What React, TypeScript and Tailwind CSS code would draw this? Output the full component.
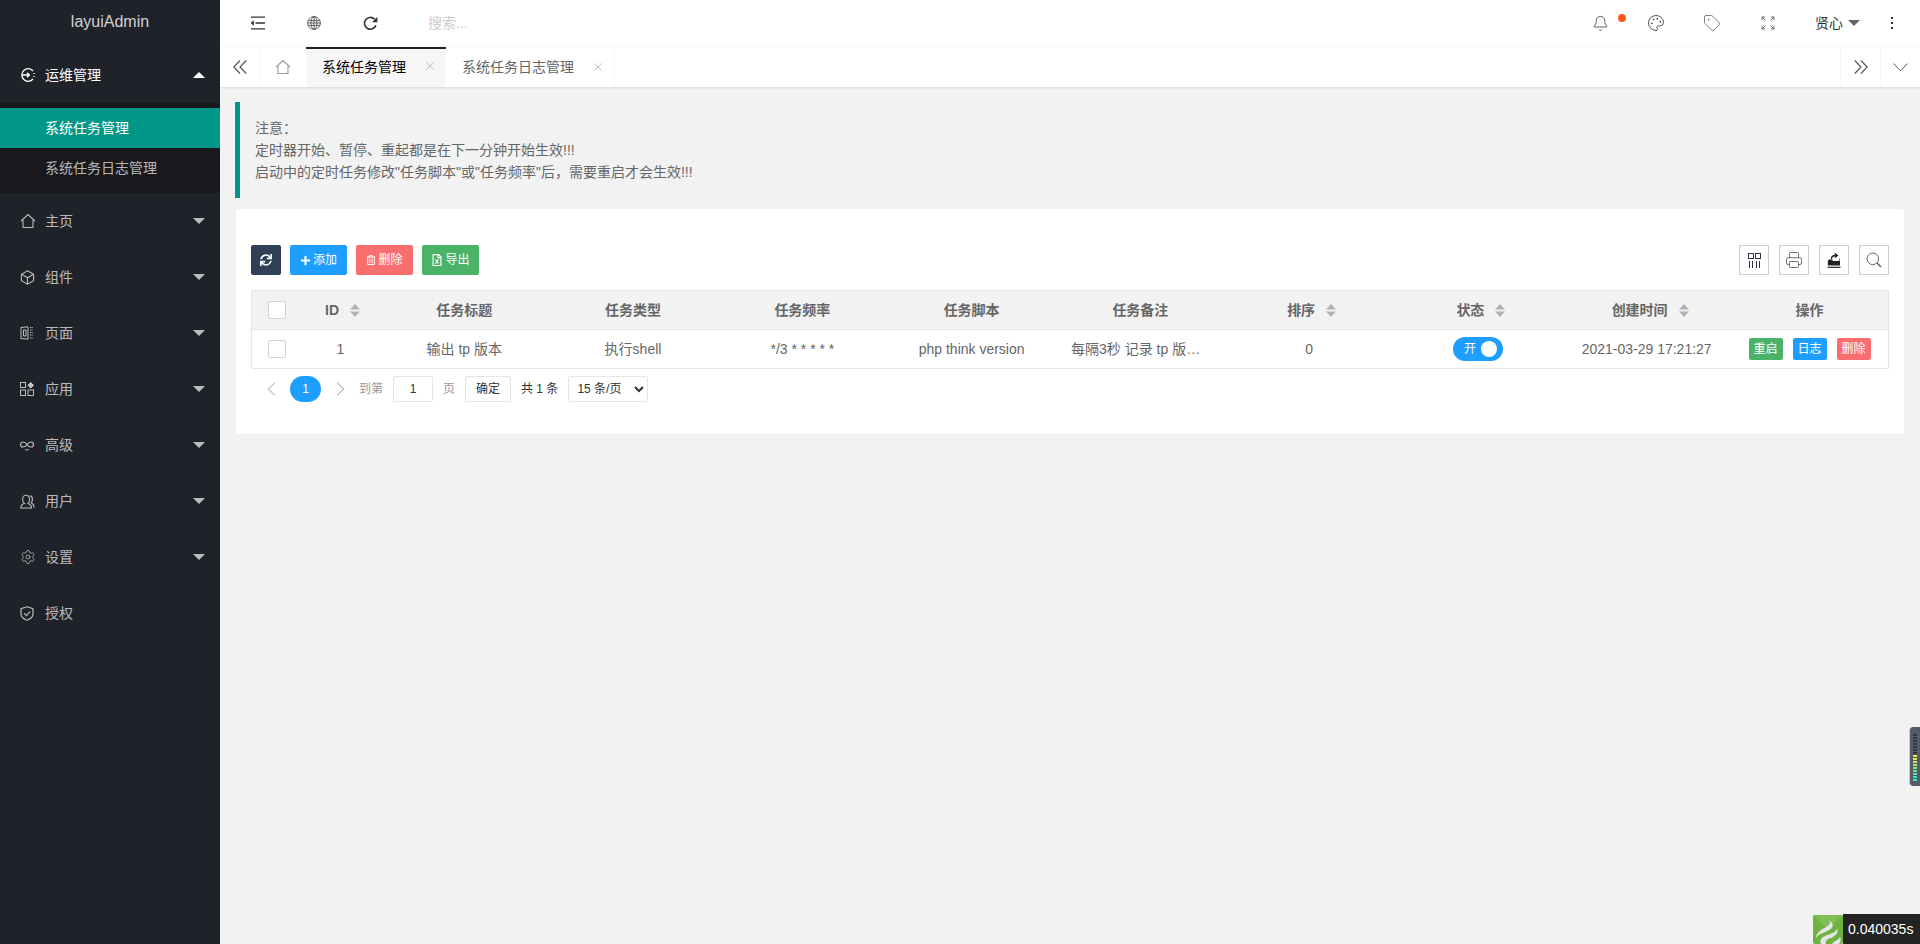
import React from "react";
import { Bell, Palette, Tag, Settings, Printer } from "lucide-react";
import { FaSync, FaPlus, FaRegTrashAlt, FaRegFileExcel } from "react-icons/fa";

function Caret({ up = false, cls = "" }: { up?: boolean; cls?: string }) {
  return (
    <svg width="12" height="6" viewBox="0 0 12 6" className={cls}>
      <path d={up ? "M0 6 L6 0 L12 6 Z" : "M0 0 L12 0 L6 6 Z"} fill="currentColor" />
    </svg>
  );
}

function HomeIcon({ size = 16 }: { size?: number }) {
  return (
    <svg width={size} height={size} viewBox="0 0 16 16" fill="none" stroke="currentColor" strokeWidth="1.1">
      <path d="M1 8 L8 1.5 L15 8" />
      <path d="M3 7 V14.5 H13 V7" />
    </svg>
  );
}

function OpsIcon() {
  return (
    <svg width="16" height="16" viewBox="0 0 16 16" fill="none" stroke="currentColor" strokeWidth="1.3">
      <path d="M13 4 A6.3 6.3 0 1 0 13 12" />
      <path d="M2 8 H9 M7 5.8 L9.4 8 L7 10.2" />
      <path d="M14 6 V7 M14 9 V10" />
    </svg>
  );
}

function CubeIcon() {
  return (
    <svg width="15" height="15" viewBox="0 0 15 15" fill="none" stroke="currentColor" strokeWidth="1.1">
      <path d="M7.5 .8 L13.6 4.2 V10.8 L7.5 14.2 L1.4 10.8 V4.2 Z" />
      <path d="M2 4.6 L7.5 7.8 L13 4.6 M7.5 7.8 V13.8" />
    </svg>
  );
}

function PageIcon() {
  return (
    <svg width="14" height="14" viewBox="0 0 14 14" fill="none" stroke="currentColor" strokeWidth="1">
      <path d="M1 1.5 L8 .8 V13.2 L1 12.5 Z" />
      <path d="M3.5 4 H6 V10 H3.5 Z" />
      <path d="M10 1.5 H13 M10 4 H13 M10 6.5 H13 M10 9 H13 M10 12 H13" strokeDasharray="1.5 .8" />
    </svg>
  );
}

function AppIcon() {
  return (
    <svg width="14" height="14" viewBox="0 0 14 14" fill="none" stroke="currentColor" strokeWidth="1">
      <rect x=".5" y=".5" width="5" height="5" />
      <rect x=".5" y="8" width="5" height="5.5" />
      <rect x="8" y="8" width="5.5" height="5.5" />
      <path d="M10.7 .5 L13.5 3.3 L10.7 6 L8 3.3 Z" fill="currentColor" />
    </svg>
  );
}

function InfinityIcon() {
  return (
    <svg width="14" height="14" viewBox="0 0 14 14" fill="none" stroke="currentColor" strokeWidth="1.2">
      <path d="M7 6.5 C5.5 4 3.8 4 2.8 4 C1.4 4 .6 5.2 .6 6.5 C.6 7.8 1.4 9 2.8 9 C3.8 9 5.5 9 7 6.5 C8.5 4 10.2 4 11.2 4 C12.6 4 13.4 5.2 13.4 6.5 C13.4 7.8 12.6 9 11.2 9 C10.2 9 8.5 9 7 6.5 Z" />
      <path d="M5 11.8 H9" strokeWidth="1" />
    </svg>
  );
}

function UserIcon() {
  return (
    <svg width="15" height="15" viewBox="0 0 15 15" fill="none" stroke="currentColor" strokeWidth="1.1">
      <path d="M.8 14 H11.5 C11.5 11.5 9.5 10 8 9.5 C9.4 8.5 9.6 7 9.6 5.2 C9.6 2.8 8 1.2 6 1.2 C4 1.2 2.6 2.8 2.6 5.2 C2.6 7 3 8.5 4.4 9.5 C2.6 10 .8 11.5 .8 14 Z" />
      <path d="M10 1.6 C12 2.4 12.6 4.2 12.4 6 C12.3 7.4 11.8 8 11.2 8.8 C12.8 9.6 14 11 14.2 13.6" />
    </svg>
  );
}

function ShieldIcon() {
  return (
    <svg width="14" height="15" viewBox="0 0 14 15" fill="none" stroke="currentColor" strokeWidth="1.2">
      <path d="M7 .8 L13 2.8 V8 C13 11 10 13.2 7 14.2 C4 13.2 1 11 1 8 V2.8 Z" />
      <path d="M4 7.2 L6.4 9.6 L10 5.6" />
    </svg>
  );
}

function SpreadIcon() {
  return (
    <svg width="16" height="14" viewBox="0 0 16 14" fill="none" stroke="#333" strokeWidth="1.3">
      <path d="M1 1.2 H15 M5.5 7 H15 M1 12.8 H15" />
      <path d="M3.6 4.8 L1 7 L3.6 9.2 Z" fill="#333" strokeWidth=".6" />
    </svg>
  );
}

function GlobeIcon() {
  return (
    <svg width="14" height="14" viewBox="0 0 14 14" fill="none" stroke="#555" strokeWidth=".9">
      <circle cx="7" cy="7" r="6.4" />
      <ellipse cx="7" cy="7" rx="3" ry="6.4" />
      <path d="M7 .6 V13.4 M1 4.6 H13 M.6 7 H13.4 M1 9.4 H13" />
    </svg>
  );
}

function RefreshIcon() {
  return (
    <svg width="15" height="15" viewBox="0 0 15 15" fill="none" stroke="#333" strokeWidth="1.6">
      <path d="M12.9 9.4 A5.9 5.9 0 1 1 11.6 3.2" />
      <path d="M14.4 .8 V6.2 H9 Z" fill="#333" stroke="none" />
    </svg>
  );
}

function FullIcon() {
  return (
    <svg width="14" height="14" viewBox="0 0 14 14" fill="none" stroke="#666" strokeWidth="1">
      <path d="M1 4 V1 H4 M1 1 L4.5 4.5" />
      <path d="M13 4 V1 H10 M13 1 L9.5 4.5" />
      <path d="M1 10 V13 H4 M1 13 L4.5 9.5" />
      <path d="M13 10 V13 H10 M13 13 L9.5 9.5" />
    </svg>
  );
}

function DoubleChevron({ right = false }: { right?: boolean }) {
  return (
    <svg width="14" height="14" viewBox="0 0 14 14" fill="none" stroke="#555" strokeWidth="1.2" className={right ? "rotate-180" : ""}>
      <path d="M7 .5 L.8 7 L7 13.5" />
      <path d="M13.2 .5 L7 7 L13.2 13.5" />
    </svg>
  );
}

function Chevron({ dir, color }: { dir: "left" | "right" | "down"; color: string }) {
  if (dir === "down") {
    return (
      <svg width="15" height="9" viewBox="0 0 15 9" fill="none" stroke={color} strokeWidth="1">
        <path d="M.5 .5 L7.5 7.8 L14.5 .5" />
      </svg>
    );
  }
  return (
    <svg width="9" height="14" viewBox="0 0 9 14" fill="none" stroke={color} strokeWidth="1.1">
      <path d={dir === "left" ? "M8 .7 L1.2 7 L8 13.3" : "M1 .7 L7.8 7 L1 13.3"} />
    </svg>
  );
}

function CloseIcon({ cls }: { cls: string }) {
  return (
    <svg width="8" height="8" viewBox="0 0 8 8" fill="none" stroke="#c2c2c2" strokeWidth="1" className={cls}>
      <path d="M.3 .3 L7.7 7.7 M7.7 .3 L.3 7.7" />
    </svg>
  );
}

function ColsIcon() {
  return (
    <svg width="13" height="15" viewBox="0 0 13 15" fill="none" stroke="#3b2a4a" strokeWidth="1">
      <rect x=".5" y=".5" width="5" height="5" />
      <rect x="7.5" y=".5" width="5" height="5" />
      <path d="M1.5 8 V15 M4.5 8 V15 M8.5 8 V15 M11.5 8 V15" />
    </svg>
  );
}

function ExportIcon() {
  return (
    <svg width="14" height="16" viewBox="0 0 14 16" fill="none">
      <path d="M.8 9 L2 7.5 H5 L6 9 H13 V13.6 H.8 Z" fill="#222" />
      <path d="M.5 15.3 H13.5" stroke="#222" strokeWidth="1.2" />
      <path d="M4.5 7 C4.5 4.5 6.5 3.5 8.5 3.5" stroke="#222" strokeWidth="1.4" />
      <path d="M7.8 .8 L11.5 3.5 L7.8 6.2 Z" fill="#222" />
      <path d="M12.5 6.5 V9" stroke="#777" />
    </svg>
  );
}

function MagnifierIcon() {
  return (
    <svg width="16" height="16" viewBox="0 0 16 16" fill="none" stroke="#666" strokeWidth="1">
      <circle cx="6.8" cy="6.8" r="5.8" />
      <path d="M11 11 L15 15" strokeWidth="1.6" />
    </svg>
  );
}

function Sort() {
  return (
    <svg width="10" height="13" viewBox="0 0 10 13" className="ml-[11px] text-[#b2b2b2]">
      <path d="M0 5.5 L5 0 L10 5.5 Z M0 7.5 L5 13 L10 7.5 Z" fill="currentColor" />
    </svg>
  );
}

function Check() {
  return <span className="block w-[18px] h-[18px] rounded-[2px] border border-[#d2d2d2] bg-white" />;
}

function Flame() {
  return (
    <svg width="30" height="29" viewBox="0 0 30 29" className="block">
      <rect width="30" height="29" rx="2" fill="#6db33f" />
      <path d="M0 0 L15 14 L30 0 Z" fill="#80bf53" />
      <path d="M16 5 C20 9 13 12 8 15 C5 17 3 20 3 23 C7 17 14 18 19 13 C21 10 19 7 16 5 Z" fill="#e6e6e6" />
      <path d="M24 13 C24 18 15 19 10 22 C7 24 7 27 8 29 H13 C12 26 14 24 18 23 C22 21 26 18 24 13 Z" fill="#e6e6e6" />
      <path d="M27 22 C26 25 21 26 19 29 H26 C28 27 28 24 27 22 Z" fill="#e6e6e6" />
    </svg>
  );
}

const menus: { label: string; icon: React.ReactNode; caret: boolean }[] = [
  { label: "主页", icon: <HomeIcon />, caret: true },
  { label: "组件", icon: <CubeIcon />, caret: true },
  { label: "页面", icon: <PageIcon />, caret: true },
  { label: "应用", icon: <AppIcon />, caret: true },
  { label: "高级", icon: <InfinityIcon />, caret: true },
  { label: "用户", icon: <UserIcon />, caret: true },
  { label: "设置", icon: <Settings size={16} strokeWidth={1.1} />, caret: true },
  { label: "授权", icon: <ShieldIcon />, caret: false },
];

const GRID = "grid grid-cols-[49px_79px_168.5px_169px_169.75px_repeat(5,168.75px)_1fr] items-center text-center";

const meterColors = [
  "#333640", "#333640", "#333640", "#333640", "#333640", "#333640", "#333640",
  "#e6e24a", "#e6e24a", "#c9e65a", "#a6e66e", "#8fe67a", "#6fe68a", "#4fe6a0", "#3fe6b8", "#3fe6c8",
];

export default function App() {
  return (
    <div className="flex h-screen w-full overflow-hidden bg-[#f2f2f2] text-[14px] text-[#666] font-['Liberation_Sans','Noto_Sans_CJK_SC',sans-serif]">
      {/* Sidebar */}
      <aside className="w-[220px] shrink-0 bg-[#20222a] text-[rgba(255,255,255,0.7)]">
        <div className="h-[47px] flex items-center justify-center pb-[3px] text-[16px] text-[rgba(255,255,255,0.8)]">layuiAdmin</div>
        <div className="h-[56px] flex items-center pl-5 pr-[15px] text-white">
          <span className="w-[25px] flex"><OpsIcon /></span>
          <span className="flex-1">运维管理</span>
          <Caret up />
        </div>
        <div className="bg-[#18181d] py-[5px]">
          <div className="h-10 flex items-center pl-[45px] bg-[#009688] text-white">系统任务管理</div>
          <div className="h-10 flex items-center pl-[45px]">系统任务日志管理</div>
        </div>
        {menus.map((m) => (
          <div key={m.label} className="h-[56px] flex items-center pl-5 pr-[15px]">
            <span className="w-[25px] flex">{m.icon}</span>
            <span className="flex-1">{m.label}</span>
            {m.caret && <Caret />}
          </div>
        ))}
      </aside>

      <div className="flex-1 min-w-0 flex flex-col">
        {/* Top bar */}
        <header className="h-[47px] shrink-0 bg-white border-b border-[#f6f6f6] flex items-center text-[#333]">
          <div className="w-[56px] ml-[10px] flex justify-center"><SpreadIcon /></div>
          <div className="w-[56px] flex justify-center"><GlobeIcon /></div>
          <div className="w-[56px] flex justify-center"><RefreshIcon /></div>
          <span className="ml-[30px] text-[#ccc]">搜索...</span>
          <div className="ml-auto flex items-center">
            <span className="relative w-[56px] flex justify-center">
              <Bell size={17} strokeWidth={1.1} />
              <span className="absolute left-[46px] -top-[1px] w-2 h-2 rounded-full bg-[#ff5722]" />
            </span>
            <span className="w-[56px] flex justify-center"><Palette size={18} strokeWidth={1.1} /></span>
            <span className="w-[56px] flex justify-center text-[#555]"><Tag size={18} strokeWidth={1} /></span>
            <span className="w-[56px] flex justify-center"><FullIcon /></span>
            <span className="ml-[19px] text-[14px] leading-none">贤心</span>
            <Caret cls="ml-[5px] text-[#666]" />
            <span className="ml-[31px] mr-[27px] flex flex-col gap-[3px]">
              <i className="block w-[2px] h-[2px] bg-[#333]" />
              <i className="block w-[2px] h-[2px] bg-[#333]" />
              <i className="block w-[2px] h-[2px] bg-[#333]" />
            </span>
          </div>
        </header>

        {/* Tabs */}
        <div className="h-[40px] shrink-0 bg-white flex items-stretch shadow-[0_1px_2px_rgba(0,0,0,0.1)] relative z-10">
          <div className="w-[40px] flex items-center justify-center border-r border-[#f6f6f6]"><DoubleChevron /></div>
          <div className="w-[46px] flex items-center justify-center text-[#999]"><HomeIcon /></div>
          <div className="w-[140px] flex items-center pl-4 pb-[2px] bg-[#f6f6f6] border-t-2 border-[#20222a] text-[#000] relative">
            系统任务管理
            <CloseIcon cls="absolute left-[120px] top-[13px]" />
          </div>
          <div className="w-[169px] flex items-center pl-[16px] border-r border-[#f6f6f6] relative">
            系统任务日志管理
            <CloseIcon cls="absolute left-[148px] top-[16px]" />
          </div>
          <div className="ml-auto w-[40px] flex items-center justify-center border-l border-[#f6f6f6]"><DoubleChevron right /></div>
          <div className="w-[40px] flex items-center justify-center border-l border-[#f6f6f6]"><Chevron dir="down" color="#555" /></div>
        </div>

        {/* Content */}
        <main className="flex-1 p-[15px]">
          <div className="h-[96px] border-l-[5px] border-[#009688] pl-[15px] py-[15px] leading-[22px] mb-[11px]">
            <div>注意：</div>
            <div>定时器开始、暂停、重起都是在下一分钟开始生效!!!</div>
            <div>启动中的定时任务修改"任务脚本"或"任务频率"后，需要重启才会生效!!!</div>
          </div>

          <section className="bg-white rounded-[4px] h-[225px] ml-[1px] mr-[1px] pl-[15px] pr-[15px] pt-9">
            <div className="flex items-center h-[30px] text-[12px] text-white">
              <button className="w-[30px] h-[30px] rounded-[2px] bg-[#2f4056] flex items-center justify-center"><FaSync size={12} /></button>
              <button className="ml-[9px] w-[57px] h-[30px] rounded-[2px] bg-[#1e9fff] flex items-center justify-center gap-[2px]"><FaPlus size={11} />添加</button>
              <button className="ml-[9px] w-[57px] h-[30px] rounded-[2px] bg-[#f96e6e] flex items-center justify-center gap-[2px]"><FaRegTrashAlt size={10} />删除</button>
              <button className="ml-[9px] w-[57px] h-[30px] rounded-[2px] bg-[#4bb368] flex items-center justify-center gap-[2px]"><FaRegFileExcel size={12} />导出</button>
              <div className="ml-auto flex gap-[10px] text-[#666]">
                <span className="w-[30px] h-[30px] border border-[#ccc] flex items-center justify-center"><ColsIcon /></span>
                <span className="w-[30px] h-[30px] border border-[#ccc] flex items-center justify-center"><Printer size={18} strokeWidth={1.2} /></span>
                <span className="w-[30px] h-[30px] border border-[#ccc] flex items-center justify-center"><ExportIcon /></span>
                <span className="w-[30px] h-[30px] border border-[#ccc] flex items-center justify-center"><MagnifierIcon /></span>
              </div>
            </div>

            <div className="mt-[15px] border border-[#e6e6e6]">
              <div className={`${GRID} h-[39px] bg-[#f2f2f2] font-bold border-b border-[#e6e6e6]`}>
                <span className="flex justify-center"><Check /></span>
                <span className="flex items-center justify-center pl-[4px]">ID<Sort /></span>
                <span>任务标题</span>
                <span>任务类型</span>
                <span>任务频率</span>
                <span>任务脚本</span>
                <span>任务备注</span>
                <span className="flex items-center justify-center pl-[5px]">排序<Sort /></span>
                <span className="flex items-center justify-center pl-[6px]">状态<Sort /></span>
                <span className="flex items-center justify-center pl-[7px]">创建时间<Sort /></span>
                <span>操作</span>
              </div>
              <div className={`${GRID} h-[38px]`}>
                <span className="flex justify-center"><Check /></span>
                <span>1</span>
                <span>输出 tp 版本</span>
                <span>执行shell</span>
                <span>*/3 * * * * *</span>
                <span>php think version</span>
                <span className="px-[15px] truncate">每隔3秒 记录 tp 版本信息</span>
                <span>0</span>
                <span className="flex justify-center">
                  <span className="w-[50px] h-[24px] rounded-full bg-[#1e9fff] flex items-center pl-[11px] text-[12px] text-white">
                    开<i className="ml-[5px] block w-[16px] h-[16px] rounded-full bg-white" />
                  </span>
                </span>
                <span>2021-03-29 17:21:27</span>
                <span className="flex justify-center gap-[10px] text-[12px] text-white">
                  <span className="w-[34px] h-[22px] leading-[22px] rounded-[2px] bg-[#4bb368]">重启</span>
                  <span className="w-[34px] h-[22px] leading-[22px] rounded-[2px] bg-[#1e9fff]">日志</span>
                  <span className="w-[34px] h-[22px] leading-[22px] rounded-[2px] bg-[#f96e6e]">删除</span>
                </span>
              </div>
            </div>

            <div className="mt-[7px] h-[26px] flex items-center text-[12px]">
              <span className="ml-[16px]"><Chevron dir="left" color="#c2c2c2" /></span>
              <span className="ml-[14px] w-[31px] h-[26px] rounded-full bg-[#1e9fff] text-white flex items-center justify-center">1</span>
              <span className="ml-[15px]"><Chevron dir="right" color="#b5b5b5" /></span>
              <span className="ml-[14px] text-[#999]">到第</span>
              <input readOnly value="1" className="ml-[10px] w-[40px] h-[26px] border border-[#e6e6e6] rounded-[2px] text-center text-[#333] outline-none" />
              <span className="ml-[10px] text-[#999]">页</span>
              <span className="ml-[10px] w-[46px] h-[26px] border border-[#e6e6e6] rounded-[2px] flex items-center justify-center text-[#333]">确定</span>
              <span className="ml-[10px] text-[#333]">共 1 条</span>
              <select className="ml-[10px] w-[80px] h-[26px] border border-[#e6e6e6] rounded-[2px] bg-white pl-1 text-[#333] outline-none">
                <option>15 条/页</option>
              </select>
            </div>
          </section>
        </main>
      </div>

      {/* Floating widgets */}
      <div className="fixed right-0 top-[727px] w-[11px] h-[59px] rounded-l-[4px] bg-[#565b69] border-l border-[#c8ccd4] pt-[7px] pl-[3px] flex flex-col gap-[1px]">
        {meterColors.map((c, i) => (
          <i key={i} className="block w-[4px] h-[2px]" style={{ backgroundColor: c }} />
        ))}
      </div>
      <div className="fixed right-0 bottom-0 flex items-end">
        <Flame />
        <div className="w-[77px] h-[30px] bg-[#232323] text-white pl-[5px] flex items-center text-[14px]">0.040035s</div>
      </div>
    </div>
  );
}
